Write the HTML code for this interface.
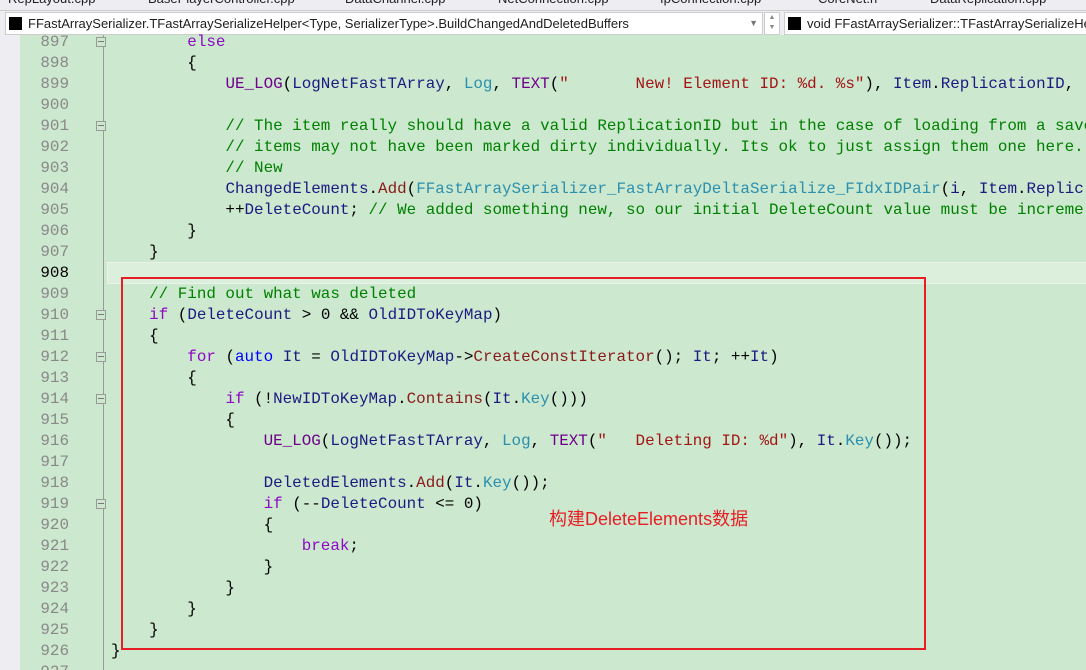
<!DOCTYPE html>
<html><head><meta charset="utf-8"><style>
html,body{margin:0;width:1086px;height:670px;overflow:hidden}
body{background:#cce8cf;position:relative;font-family:"Liberation Mono",monospace;}
#tabs{position:absolute;left:0;top:0;width:1086px;height:10px;background:#eeeef2;overflow:hidden;font:13px "Liberation Sans",sans-serif;color:#1e1e1e;border-bottom:1px solid #ccc}
#tabs span{position:absolute;top:-9px}
#bar{position:absolute;left:0;top:11px;width:1086px;height:24px;background:#eeeef2;font:13px "Liberation Sans",sans-serif;color:#1e1e1e}
.dd{position:absolute;top:1px;height:21px;background:#fff;border:1px solid #ccc;line-height:21px;white-space:nowrap;overflow:hidden}
.sq{display:inline-block;width:13px;height:13px;background:#000;vertical-align:-2px;margin:0 6px 0 3px}
#gut{position:absolute;left:0;top:35px;width:20px;height:635px;background:#eeeef2}
.ln{position:absolute;left:20px;width:49px;text-align:right;color:#888;font-size:15.9px;line-height:21px;margin-top:1px}
.c{position:absolute;left:111px;font-size:15.9px;line-height:21px;white-space:pre;color:#000;margin-top:1px}
.k{color:#8f08c4}.m{color:#6f008a}.i{color:#1a1a80}.t{color:#2b8fae}.s{color:#a31515}.cm{color:#008000}.f{color:#8a1a1a}.b{color:#0000ff}
.fold{position:absolute;left:96px;width:8px;height:8px;border:1px solid #999;background:#cce8cf}
.fold:after{content:"";position:absolute;left:1px;top:3px;width:6px;height:1px;background:#777}
</style></head><body>
<div id="tabs"><span style="left:8px">RepLayout.cpp</span><span style="left:148px">BasePlayerController.cpp</span><span style="left:345px">DataChannel.cpp</span><span style="left:498px">NetConnection.cpp</span><span style="left:660px">IpConnection.cpp</span><span style="left:818px">CoreNet.h</span><span style="left:930px">DataReplication.cpp</span></div>
<div id="bar">
<div class="dd" style="left:5px;width:756px"><span class="sq"></span>FFastArraySerializer.TFastArraySerializeHelper&lt;Type, SerializerType&gt;.BuildChangedAndDeletedBuffers<span style="position:absolute;right:4px;color:#777;font-size:9px">▼</span></div>
<div style="position:absolute;left:764px;top:1px;width:14px;height:21px;background:#fff;border:1px solid #ccc;font-size:7px;color:#888;text-align:center;line-height:10px">▲<br>▼</div>
<div class="dd" style="left:784px;width:310px"><span class="sq"></span>void FFastArraySerializer::TFastArraySerializeHelp</div>
</div>
<div id="gut"></div>
<div style="position:absolute;left:103px;top:35px;width:1px;height:635px;background:#999"></div>
<div style="position:absolute;left:107px;top:262px;width:979px;height:20px;background:#dcefdd;border:1px solid #e8f4e8"></div>
<div style="position:absolute;left:121px;top:277px;width:801px;height:369px;border:2px solid #e81e25"></div>
<div style="position:absolute;left:549px;top:505px;color:#e81e25;font:18px 'Liberation Sans','Noto Sans CJK SC',sans-serif">构建DeleteElements数据</div>

<div class="ln" style="top:31px">897</div><div class="c" style="top:31px">        <span class="k">else</span></div>
<div class="ln" style="top:52px">898</div><div class="c" style="top:52px">        {</div>
<div class="ln" style="top:73px">899</div><div class="c" style="top:73px">            <span class="m">UE_LOG</span>(<span class="i">LogNetFastTArray</span>, <span class="t">Log</span>, <span class="m">TEXT</span>(<span class="s">"       New! Element ID: %d. %s"</span>), <span class="i">Item</span>.<span class="i">ReplicationID</span>,</div>
<div class="ln" style="top:94px">900</div>
<div class="ln" style="top:115px">901</div><div class="c cm" style="top:115px">            // The item really should have a valid ReplicationID but in the case of loading from a save</div>
<div class="ln" style="top:136px">902</div><div class="c cm" style="top:136px">            // items may not have been marked dirty individually. Its ok to just assign them one here.</div>
<div class="ln" style="top:157px">903</div><div class="c cm" style="top:157px">            // New</div>
<div class="ln" style="top:178px">904</div><div class="c" style="top:178px">            <span class="i">ChangedElements</span>.<span class="f">Add</span>(<span class="t">FFastArraySerializer_FastArrayDeltaSerialize_FIdxIDPair</span>(<span class="i">i</span>, <span class="i">Item</span>.<span class="i">Replic</span></div>
<div class="ln" style="top:199px">905</div><div class="c" style="top:199px">            ++<span class="i">DeleteCount</span>; <span class="cm">// We added something new, so our initial DeleteCount value must be increme</span></div>
<div class="ln" style="top:220px">906</div><div class="c" style="top:220px">        }</div>
<div class="ln" style="top:241px">907</div><div class="c" style="top:241px">    }</div>
<div class="ln" style="top:262px;color:#000">908</div>
<div class="ln" style="top:283px">909</div><div class="c cm" style="top:283px">    // Find out what was deleted</div>
<div class="ln" style="top:304px">910</div><div class="c" style="top:304px">    <span class="k">if</span> (<span class="i">DeleteCount</span> &gt; 0 &amp;&amp; <span class="i">OldIDToKeyMap</span>)</div>
<div class="ln" style="top:325px">911</div><div class="c" style="top:325px">    {</div>
<div class="ln" style="top:346px">912</div><div class="c" style="top:346px">        <span class="k">for</span> (<span class="b">auto</span> <span class="i">It</span> = <span class="i">OldIDToKeyMap</span>-&gt;<span class="f">CreateConstIterator</span>(); <span class="i">It</span>; ++<span class="i">It</span>)</div>
<div class="ln" style="top:367px">913</div><div class="c" style="top:367px">        {</div>
<div class="ln" style="top:388px">914</div><div class="c" style="top:388px">            <span class="k">if</span> (!<span class="i">NewIDToKeyMap</span>.<span class="f">Contains</span>(<span class="i">It</span>.<span class="t">Key</span>()))</div>
<div class="ln" style="top:409px">915</div><div class="c" style="top:409px">            {</div>
<div class="ln" style="top:430px">916</div><div class="c" style="top:430px">                <span class="m">UE_LOG</span>(<span class="i">LogNetFastTArray</span>, <span class="t">Log</span>, <span class="m">TEXT</span>(<span class="s">"   Deleting ID: %d"</span>), <span class="i">It</span>.<span class="t">Key</span>());</div>
<div class="ln" style="top:451px">917</div>
<div class="ln" style="top:472px">918</div><div class="c" style="top:472px">                <span class="i">DeletedElements</span>.<span class="f">Add</span>(<span class="i">It</span>.<span class="t">Key</span>());</div>
<div class="ln" style="top:493px">919</div><div class="c" style="top:493px">                <span class="k">if</span> (--<span class="i">DeleteCount</span> &lt;= 0)</div>
<div class="ln" style="top:514px">920</div><div class="c" style="top:514px">                {</div>
<div class="ln" style="top:535px">921</div><div class="c" style="top:535px">                    <span class="k">break</span>;</div>
<div class="ln" style="top:556px">922</div><div class="c" style="top:556px">                }</div>
<div class="ln" style="top:577px">923</div><div class="c" style="top:577px">            }</div>
<div class="ln" style="top:598px">924</div><div class="c" style="top:598px">        }</div>
<div class="ln" style="top:619px">925</div><div class="c" style="top:619px">    }</div>
<div class="ln" style="top:640px">926</div><div class="c" style="top:640px">}</div>
<div class="ln" style="top:661px">927</div>

<div class="fold" style="top:37px"></div>
<div class="fold" style="top:121px"></div>
<div class="fold" style="top:310px"></div>
<div class="fold" style="top:352px"></div>
<div class="fold" style="top:394px"></div>
<div class="fold" style="top:499px"></div>
</body></html>
